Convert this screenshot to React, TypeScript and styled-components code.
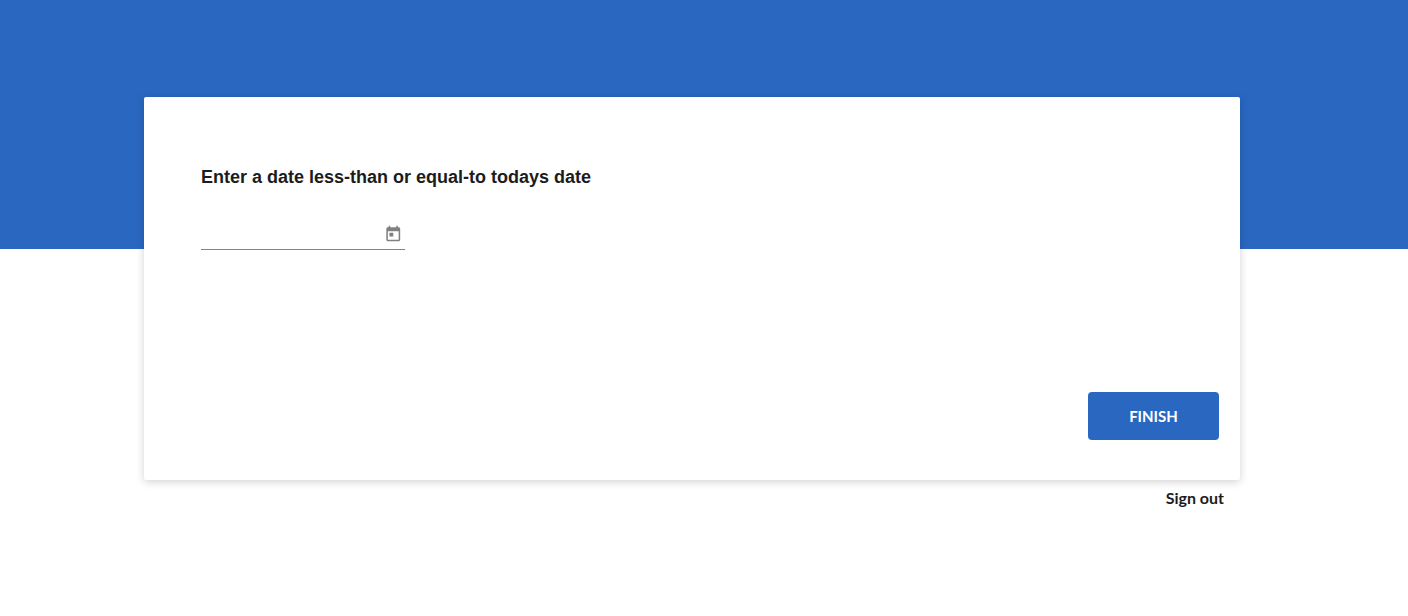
import React from 'react'
import styled, { createGlobalStyle } from 'styled-components'

const GlobalStyle = createGlobalStyle`
  html, body {
    margin: 0;
    padding: 0;
    background: #ffffff;
  }
`

function CalendarIcon() {
  return (
    <CalendarSvg viewBox="0 0 24 24" aria-hidden="true">
      <path d="M19 3h-1V1h-2v2H8V1H6v2H5c-1.11 0-1.99.9-1.99 2L3 19c0 1.1.89 2 2 2h14c1.1 0 2-.9 2-2V5c0-1.1-.9-2-2-2zm0 16H5V8h14v11zM7 10h5v5H7z" />
    </CalendarSvg>
  )
}

export default function App() {
  return (
    <Page>
      <GlobalStyle />
      <Banner />
      <Main>
        <Card>
          <Question>Enter a date less-than or equal-to todays date</Question>
          <DateField>
            <CalendarIcon />
          </DateField>
          <Actions>
            <FinishButton type="button">FINISH</FinishButton>
          </Actions>
        </Card>
        <Footer>
          <SignOut href="#">Sign out</SignOut>
        </Footer>
      </Main>
    </Page>
  )
}

const Page = styled.div`
  min-height: 616px;
  overflow: hidden;
`

const Banner = styled.div`
  height: 249px;
  background-color: #2967c1;
`

const Main = styled.main`
  width: 1096px;
  margin: -152px 0 0 144px;
`

const Card = styled.section`
  display: flex;
  flex-direction: column;
  box-sizing: border-box;
  height: 383px;
  padding: 69px 21px 40px 57px;
  background-color: #ffffff;
  border-radius: 2px;
  box-shadow: 0 2px 8px rgba(0, 0, 0, 0.18);
`

const Question = styled.h2`
  margin: 0;
  color: #1c1c1c;
  font-family: 'Liberation Sans', Arial, sans-serif;
  font-size: 18px;
  line-height: 22px;
  font-weight: 700;
`

const DateField = styled.div`
  display: flex;
  justify-content: flex-end;
  align-items: flex-end;
  box-sizing: border-box;
  width: 204px;
  height: 35px;
  margin-top: 27px;
  padding: 0 3px 6px 0;
  border-bottom: 1px solid #7b8790;
`

const CalendarSvg = styled.svg`
  display: block;
  width: 18.5px;
  height: 18.5px;
  fill: #808080;
`

const Actions = styled.div`
  display: flex;
  justify-content: flex-end;
  margin-top: auto;
`

const FinishButton = styled.button`
  width: 131px;
  height: 48px;
  padding: 0 0 1px;
  color: #ffffff;
  background-color: #2967c1;
  border: none;
  border-radius: 4px;
  font-family: Lato, 'Open Sans', sans-serif;
  font-size: 15px;
  font-weight: 700;
  cursor: pointer;
`

const Footer = styled.div`
  display: flex;
  justify-content: flex-end;
  padding: 8px 16px 0 0;
`

const SignOut = styled.a`
  color: #1c1c1c;
  font-family: Lato, 'Open Sans', sans-serif;
  font-size: 16px;
  line-height: 20px;
  font-weight: 700;
  text-decoration: none;
`
